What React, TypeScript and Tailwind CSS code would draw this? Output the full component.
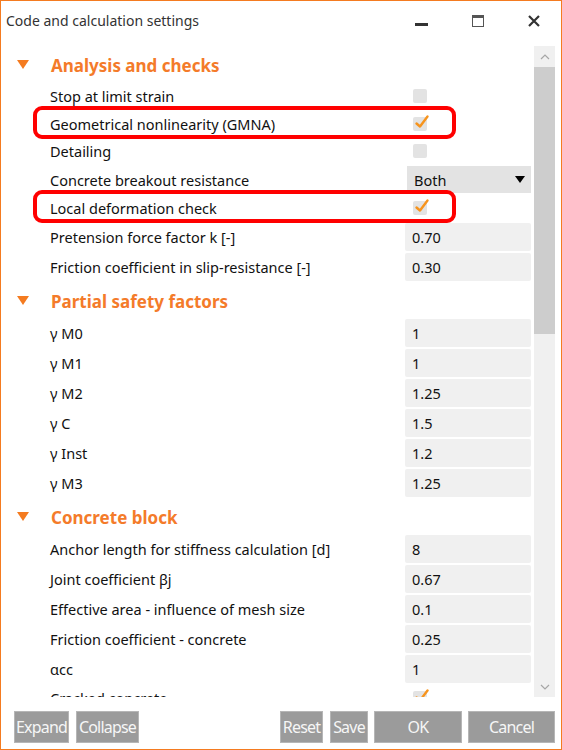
import { ReactNode } from 'react';

type Row =
  | { kind: 'header'; label: string }
  | { kind: 'check'; label: string; checked: boolean; mark?: boolean; h?: number }
  | { kind: 'select'; label: string; value: string }
  | { kind: 'input'; label: string; value: string };

const rows: Row[] = [
  { kind: 'header', label: 'Analysis and checks' },
  { kind: 'check', label: 'Stop at limit strain', checked: false },
  { kind: 'check', label: 'Geometrical nonlinearity (GMNA)', checked: true, mark: true, h: 27 },
  { kind: 'check', label: 'Detailing', checked: false },
  { kind: 'select', label: 'Concrete breakout resistance', value: 'Both' },
  { kind: 'check', label: 'Local deformation check', checked: true, mark: true },
  { kind: 'input', label: 'Pretension force factor k [-]', value: '0.70' },
  { kind: 'input', label: 'Friction coefficient in slip-resistance [-]', value: '0.30' },
  { kind: 'header', label: 'Partial safety factors' },
  { kind: 'input', label: 'γ M0', value: '1' },
  { kind: 'input', label: 'γ M1', value: '1' },
  { kind: 'input', label: 'γ M2', value: '1.25' },
  { kind: 'input', label: 'γ C', value: '1.5' },
  { kind: 'input', label: 'γ Inst', value: '1.2' },
  { kind: 'input', label: 'γ M3', value: '1.25' },
  { kind: 'header', label: 'Concrete block' },
  { kind: 'input', label: 'Anchor length for stiffness calculation [d]', value: '8' },
  { kind: 'input', label: 'Joint coefficient βj', value: '0.67' },
  { kind: 'input', label: 'Effective area - influence of mesh size', value: '0.1' },
  { kind: 'input', label: 'Friction coefficient - concrete', value: '0.25' },
  { kind: 'input', label: 'αcc', value: '1' },
  { kind: 'check', label: 'Cracked concrete', checked: true },
];

const font = { fontFamily: '"Noto Sans", "Open Sans", sans-serif' };

const CheckBox = ({ checked }: { checked: boolean }) => (
  <span className="relative ml-[8px] block h-[14px] w-[14px] rounded-[2px] bg-[#e3e3e3]">
    {checked && (
      <svg viewBox="0 0 16 16" className="absolute -top-[3px] left-[1px] h-[16px] w-[16px]">
        <path d="M2.5 9.5 L6 12.5 L13.5 2.5" fill="none" stroke="#f7941d" strokeWidth="2.4" strokeLinecap="round" strokeLinejoin="round" />
      </svg>
    )}
  </span>
);

const Field = ({ label, h, children, mark }: { label: string; h: number; children: ReactNode; mark?: boolean }) => (
  <div className="relative flex items-center pl-[49px]" style={{ height: h }}>
    <span className="flex-1 pt-[2px] text-[14.5px] text-[#111]">{label}</span>
    <div className="mr-[3px] flex w-[126px] items-center">{children}</div>
    {mark && (
      <span className="pointer-events-none absolute top-[-4px] left-[32px] h-[33px] w-[423px] rounded-[9px] border-[4px] border-[#f00]" />
    )}
  </div>
);

const RowView = ({ row }: { row: Row }) => {
  if (row.kind === 'header') {
    return (
      <div className="flex h-[36px] items-center">
        <svg viewBox="0 0 12 9" className="mr-[22px] ml-[16px] h-[9px] w-[12px]">
          <path d="M0 0 H12 L6 9 Z" fill="#f47b20" />
        </svg>
        <span className="pt-[3px] text-[17px] font-bold text-[#f47b2a]">{row.label}</span>
      </div>
    );
  }
  if (row.kind === 'check') {
    return (
      <Field label={row.label} h={row.h ?? 28} mark={row.mark}>
        <CheckBox checked={row.checked} />
      </Field>
    );
  }
  if (row.kind === 'select') {
    return (
      <Field label={row.label} h={29}>
        <div className="ml-[2px] flex h-[27px] flex-1 items-center justify-between bg-[#e3e3e3] pr-[6px] pl-[7px]">
          <span className="pt-[2px] text-[14.5px] text-[#111]">{row.value}</span>
          <svg viewBox="0 0 10 7" className="h-[7px] w-[10px]">
            <path d="M0 0 H10 L5 7 Z" fill="#000" />
          </svg>
        </div>
      </Field>
    );
  }
  return (
    <Field label={row.label} h={30}>
      <div className="flex h-[28px] flex-1 items-center rounded-[2px] bg-[#f0f0f0] pl-[7px]">
        <span className="pt-[2px] text-[14.5px] text-[#111]">{row.value}</span>
      </div>
    </Field>
  );
};

const Button = ({ label, w, ml }: { label: string; w: string; ml?: string }) => (
  <button
    className={`flex h-[32px] ${w} ${ml ?? ''} items-center justify-center border-[1.5px] border-[#b6b6b6] bg-[#9b9b9b] text-[16px] tracking-[-0.05em] text-[#f6f6f6]`}
  >
    {label}
  </button>
);

export default function App() {
  return (
    <div className="flex h-[750px] w-[562px] flex-col border border-[#f47b20] bg-white" style={font}>
      <div className="flex h-[45px] items-start">
        <span className="mt-[9px] ml-[5px] flex-1 text-[14px] text-[#333]">Code and calculation settings</span>
        <div className="mt-[14px] flex items-center">
          <span className="mt-[6px] mr-[44px] block h-[3px] w-[13px] bg-[#333]" />
          <span className="mr-[44px] block h-[12px] w-[12px] border border-[#555] border-t-[3px]" />
          <svg viewBox="0 0 12 12" className="mr-[21px] h-[12px] w-[12px]">
            <path d="M1 1 L11 11 M11 1 L1 11" stroke="#333" strokeWidth="2.2" />
          </svg>
        </div>
      </div>

      <div className="flex h-[651px]">
        <div className="flex-1 overflow-hidden">
          {rows.map((row) => (
            <RowView key={row.label} row={row} />
          ))}
        </div>
        <div className="flex w-[21px] flex-col bg-[#f0f0f0]">
          <div className="flex h-[21px] items-center justify-center">
            <svg viewBox="0 0 10 6" className="h-[6px] w-[10px]">
              <path d="M1 5 L5 1 L9 5" fill="none" stroke="#a6a6a6" strokeWidth="1.2" />
            </svg>
          </div>
          <div className="h-[267px] bg-[#cdcdcd]" />
          <div className="flex-1" />
          <div className="flex h-[21px] items-center justify-center">
            <svg viewBox="0 0 10 6" className="h-[6px] w-[10px]">
              <path d="M1 1 L5 5 L9 1" fill="none" stroke="#a6a6a6" strokeWidth="1.2" />
            </svg>
          </div>
        </div>
        <div className="w-[6px]" />
      </div>

      <div className="flex pt-[14px] pl-[13px]">
        <Button label="Expand" w="w-[55px]" />
        <Button label="Collapse" w="w-[63px]" ml="ml-[7px]" />
        <Button label="Reset" w="w-[43px]" ml="ml-[141px]" />
        <Button label="Save" w="w-[38px]" ml="ml-[7px]" />
        <Button label="OK" w="w-[88px]" ml="ml-[6px]" />
        <Button label="Cancel" w="w-[87px]" ml="ml-[6px]" />
      </div>
    </div>
  );
}
